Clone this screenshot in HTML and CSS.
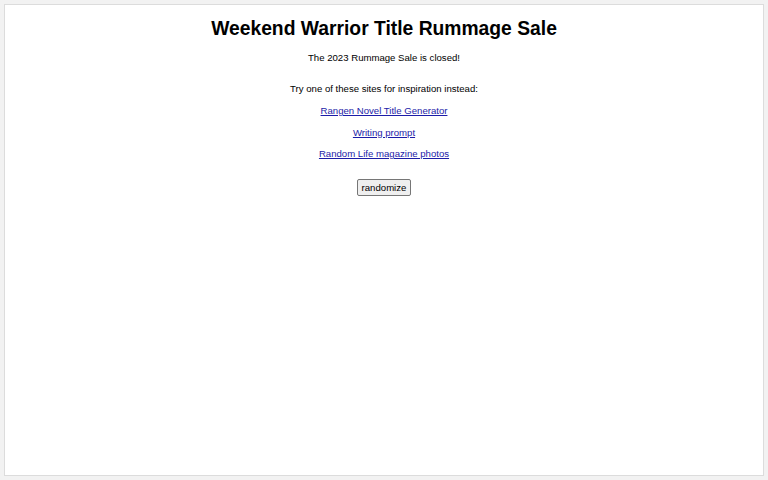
FILE: index.html
```html
<!DOCTYPE html>
<html lang="en">
<head>
  <meta charset="UTF-8" />
  <title>Weekend Warrior Title Rummage Sale</title>
  <link rel="stylesheet" href="styles.css">
</head>
<body>
  <div class="page">
    <h1>Weekend Warrior Title Rummage Sale</h1>
    <p class="notice">The 2023 Rummage Sale is closed!</p>
    <p class="intro">Try one of these sites for inspiration instead:</p>
    <p><a href="#">Rangen Novel Title Generator</a></p>
    <p><a href="#">Writing prompt</a></p>
    <p><a href="#">Random Life magazine photos</a></p>
    <div class="actions">
      <button type="button">randomize</button>
    </div>
  </div>
</body>
</html>
```

FILE: styles.css
```css
html, body {
  height: 100%;
}
body {
  margin: 0;
  padding: 4px;
  box-sizing: border-box;
  background: #f2f2f2;
  font-family: 'Liberation Sans', Arial, sans-serif;
  font-size: 9.6px;
  color: #000;
}
.page {
  height: 100%;
  box-sizing: border-box;
  background: #fff;
  border: 1px solid #dcdcdc;
  text-align: center;
  padding-top: 13px;
}
h1 {
  font-size: 19.3px;
  line-height: 22px;
  margin: 0 0 12px;
}
p {
  margin: 0 0 9.5px;
  line-height: 12px;
}
.notice {
  margin-bottom: 19px;
}
.intro {
  margin-bottom: 10px;
}
a {
  color: #1c1ca8;
}
.actions {
  margin-top: 18.5px;
}
button {
  font-family: 'Liberation Sans', Arial, sans-serif;
  font-size: 9.6px;
  line-height: 11px;
  padding: 2px 4px;
  background: #efefef;
  border: 1px solid #767676;
  border-radius: 2px;
}
```
